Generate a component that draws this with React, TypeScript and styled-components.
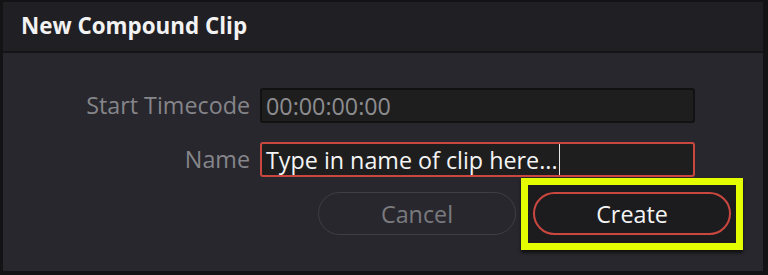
import React from "react";
import styled, { createGlobalStyle } from "styled-components";

const GlobalStyle = createGlobalStyle`
  html, body {
    margin: 0;
    padding: 0;
    background: #131315;
  }
  * {
    box-sizing: border-box;
  }
`;

const Screen = styled.div`
  width: 768px;
  height: 275px;
  padding: 2px 5px 4px 3px;
  background: #131315;
  font-family: "Open Sans", "Noto Sans", sans-serif;
  overflow: hidden;
`;

const Dialog = styled.div`
  display: flex;
  flex-direction: column;
  height: 100%;
  background: #28272d;
`;

const Header = styled.div`
  display: flex;
  align-items: center;
  height: 51px;
  padding: 0 0 2px 18px;
  background: #201f24;
  border-bottom: 2px solid #141416;
`;

const Title = styled.h1`
  margin: 0;
  font-size: 22.4px;
  font-weight: 700;
  color: #f2f2f2;
`;

const Body = styled.div`
  display: flex;
  flex-direction: column;
  padding-top: 35px;
`;

const Form = styled.div`
  display: grid;
  grid-template-columns: 247px 435px;
  column-gap: 10px;
  row-gap: 19px;
  align-items: center;
`;

const Label = styled.label`
  text-align: right;
  font-size: 23.3px;
  color: #85858a;
  line-height: 35px;
`;

const Field = styled.div<{ $active?: boolean }>`
  display: flex;
  align-items: center;
  height: 35px;
  padding: 0 4px;
  background: #1e1e1f;
  border: ${(p) => (p.$active ? "2px solid #c9473f" : "2px solid #121213")};
  border-radius: 3px;
  font-size: 23.3px;
  color: ${(p) => (p.$active ? "#f4f4f4" : "#8d8d90")};
  white-space: nowrap;
`;

const Caret = styled.span`
  display: inline-block;
  width: 1.5px;
  height: 31px;
  margin-left: 1px;
  background: #e8e8e8;
`;

const Actions = styled.div`
  display: flex;
  gap: 17px;
  margin: 15px 0 0 315px;
`;

const Button = styled.button<{ $primary?: boolean }>`
  position: relative;
  z-index: 1;
  width: 198px;
  height: 43px;
  border-radius: 22px;
  background: transparent;
  border: ${(p) => (p.$primary ? "2px solid #c9473f" : "1.5px solid #3f3e45")};
  color: ${(p) => (p.$primary ? "#f4f4f4" : "#7a7a7f")};
  font-family: inherit;
  font-size: 23.3px;
  padding: 0;
`;

const Spotlight = styled.div`
  position: relative;
  display: flex;
`;

const Highlight = styled.span`
  position: absolute;
  left: -12px;
  top: -14px;
  right: -12px;
  bottom: -15px;
  border: 7px solid #e4fd00;
  background: #1c1c1e;
  box-shadow: 0 3px 3px rgba(0, 0, 0, 0.6);
`;

export default function App() {
  return (
    <>
      <GlobalStyle />
      <Screen>
        <Dialog>
          <Header>
            <Title>New Compound Clip</Title>
          </Header>
          <Body>
            <Form>
              <Label>Start Timecode</Label>
              <Field>00:00:00:00</Field>
              <Label>Name</Label>
              <Field $active>
                Type in name of clip here...
                <Caret />
              </Field>
            </Form>
            <Actions>
              <Button>Cancel</Button>
              <Spotlight>
                <Highlight />
                <Button $primary>Create</Button>
              </Spotlight>
            </Actions>
          </Body>
        </Dialog>
      </Screen>
    </>
  );
}
